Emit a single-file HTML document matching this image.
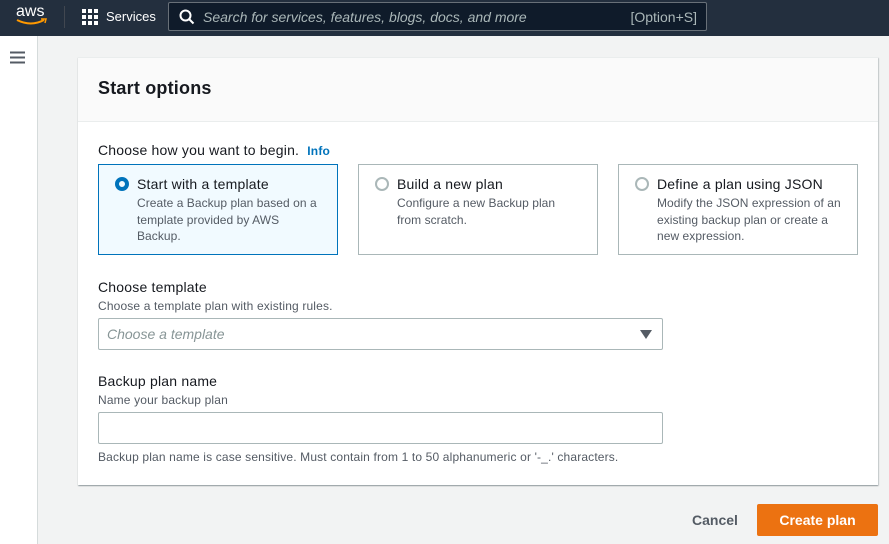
<!DOCTYPE html><html><head><style>
*{box-sizing:border-box;margin:0;padding:0}
body{width:889px;height:544px;overflow:hidden;background:#f2f3f3;font-family:"Liberation Sans",Arial,sans-serif;color:#16191f;position:relative}
.top{position:absolute;left:0;top:0;width:889px;height:36px;background:#232f3e}
.side{position:absolute;left:0;top:36px;width:38px;height:508px;background:#fff;border-right:1px solid #d5dbdb}
.card{position:absolute;left:78px;top:57px;width:800px;height:428px;background:#fff;box-shadow:0 1px 1px rgba(0,28,36,.3),1px 1px 1px rgba(0,28,36,.15);border-top:1px solid #eaeded}
.ch{height:64px;background:#fafafa;border-bottom:1px solid #eaeded;padding:20px 20px}
.ch h2{font-size:18px;font-weight:bold;letter-spacing:.2px}
.t{position:absolute;font-size:14px;letter-spacing:.2px}
.s{position:absolute;font-size:12px;color:#545b64;letter-spacing:.15px}
.opt{position:absolute;top:106px;width:240px;height:91px;border:1px solid #aab7b8;padding:11px 14px 0 38px}
.opt.sel{background:#f1faff;border-color:#0073bb}
.opt b{font-weight:normal;font-size:14px;display:block;margin-bottom:3px;letter-spacing:.2px}
.opt span{font-size:12px;color:#545b64;line-height:16.5px;display:block;letter-spacing:.05px}
.r{position:absolute;left:16px;top:12px;width:14px;height:14px;border-radius:50%;border:2px solid #aab7b8}
.sel .r{border:4px solid #0073bb}
.in{position:absolute;left:20px;width:565px;height:32px;border:1px solid #aab7b8;border-radius:2px;background:#fff}
</style></head><body>
<div class="top">
<div style="position:absolute;left:16px;top:3px;color:#fff;font-size:16px">aws</div>
<svg style="position:absolute;left:16px;top:18px" width="32" height="8"><path d="M1 2 Q15 9 28 2" stroke="#ff9900" stroke-width="2" fill="none"/><path d="M25 1 L30 1 L29 5" stroke="#ff9900" stroke-width="1.5" fill="none"/></svg>
<div style="position:absolute;left:64px;top:6px;width:1px;height:22px;background:#414750"></div>
<svg style="position:absolute;left:82px;top:9px" width="16" height="16" fill="#fff"><rect x="0" y="0" width="4" height="4"/><rect x="6" y="0" width="4" height="4"/><rect x="12" y="0" width="4" height="4"/><rect x="0" y="6" width="4" height="4"/><rect x="6" y="6" width="4" height="4"/><rect x="12" y="6" width="4" height="4"/><rect x="0" y="12" width="4" height="4"/><rect x="6" y="12" width="4" height="4"/><rect x="12" y="12" width="4" height="4"/></svg>
<div style="position:absolute;left:106px;top:9px;color:#fff;font-size:13px">Services</div>
<div style="position:absolute;left:168px;top:2px;width:539px;height:29px;background:#0f1b2a;border:1px solid #687078;border-radius:2px">
<svg style="position:absolute;left:10px;top:6px" width="16" height="16"><circle cx="6.5" cy="6.5" r="5" stroke="#fff" stroke-width="2" fill="none"/><path d="M10 10 L14.5 14.5" stroke="#fff" stroke-width="2"/></svg>
<div style="position:absolute;left:34px;top:6px;color:#aab7b8;font-size:14px;font-style:italic">Search for services, features, blogs, docs, and more</div>
<div style="position:absolute;right:9px;top:6px;color:#aab7b8;font-size:14px">[Option+S]</div></div>
</div>
<div class="side"><svg style="position:absolute;left:10px;top:15px" width="16" height="13"><path d="M0 1.5H15M0 6.5H15M0 11.5H15" stroke="#545b64" stroke-width="2"/></svg></div>
<div class="card">
<div class="ch"><h2>Start options</h2></div>
<div class="t" style="left:20px;top:84px">Choose how you want to begin. <b style="color:#0073bb;font-size:12px;margin-left:4px">Info</b></div>
<div class="opt sel" style="left:20px"><div class="r"></div><b>Start with a template</b><span>Create a Backup plan based on a template provided by AWS Backup.</span></div>
<div class="opt" style="left:280px"><div class="r"></div><b>Build a new plan</b><span>Configure a new Backup plan<br>from scratch.</span></div>
<div class="opt" style="left:540px"><div class="r"></div><b>Define a plan using JSON</b><span>Modify the JSON expression of an<br>existing backup plan or create a<br>new expression.</span></div>
<div class="t" style="left:20px;top:221px">Choose template</div>
<div class="s" style="left:20px;top:241px">Choose a template plan with existing rules.</div>
<div class="in" style="top:260px"><span style="position:absolute;left:8px;top:7px;font-size:14px;font-style:italic;color:#879596">Choose a template</span><svg style="position:absolute;right:10px;top:11px" width="12" height="9"><path d="M0 0H12L6 9Z" fill="#545b64"/></svg></div>
<div class="t" style="left:20px;top:315px">Backup plan name</div>
<div class="s" style="left:20px;top:335px">Name your backup plan</div>
<div class="in" style="top:354px"></div>
<div class="s" style="left:20px;top:392px">Backup plan name is case sensitive. Must contain from 1 to 50 alphanumeric or '-_.' characters.</div>
</div>
<div style="position:absolute;left:692px;top:512px;font-size:14px;font-weight:bold;color:#545b64">Cancel</div>
<div style="position:absolute;left:757px;top:504px;width:121px;height:32px;background:#ec7211;border-radius:2px;color:#fff;font-size:14px;font-weight:bold;text-align:center;line-height:32px">Create plan</div>
</body></html>
